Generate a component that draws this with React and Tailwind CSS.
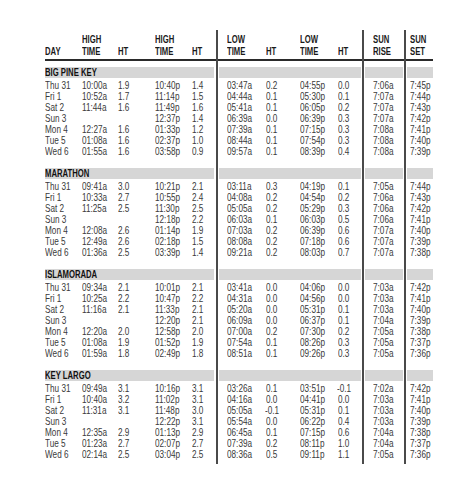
import React from "react";

const font = { fontFamily: '"Liberation Sans", Arial, sans-serif' };

// day, high1, ht, high2, ht, low1, ht, low2, ht, rise, set
const sections = [
  {
    name: "BIG PINE KEY",
    rows: [
      ["Thu 31", "10:00a", "1.9", "10:40p", "1.4", "03:47a", "0.2", "04:55p", "0.0", "7:06a", "7:45p"],
      ["Fri 1", "10:52a", "1.7", "11:14p", "1.5", "04:44a", "0.1", "05:30p", "0.1", "7:07a", "7:44p"],
      ["Sat 2", "11:44a", "1.6", "11:49p", "1.6", "05:41a", "0.1", "06:05p", "0.2", "7:07a", "7:43p"],
      ["Sun 3", "", "", "12:37p", "1.4", "06:39a", "0.0", "06:39p", "0.3", "7:07a", "7:42p"],
      ["Mon 4", "12:27a", "1.6", "01:33p", "1.2", "07:39a", "0.1", "07:15p", "0.3", "7:08a", "7:41p"],
      ["Tue 5", "01:08a", "1.6", "02:37p", "1.0", "08:44a", "0.1", "07:54p", "0.3", "7:08a", "7:40p"],
      ["Wed 6", "01:55a", "1.6", "03:58p", "0.9", "09:57a", "0.1", "08:39p", "0.4", "7:08a", "7:39p"],
    ],
  },
  {
    name: "MARATHON",
    rows: [
      ["Thu 31", "09:41a", "3.0", "10:21p", "2.1", "03:11a", "0.3", "04:19p", "0.1", "7:05a", "7:44p"],
      ["Fri 1", "10:33a", "2.7", "10:55p", "2.4", "04:08a", "0.2", "04:54p", "0.2", "7:06a", "7:43p"],
      ["Sat 2", "11:25a", "2.5", "11:30p", "2.5", "05:05a", "0.2", "05:29p", "0.3", "7:06a", "7:42p"],
      ["Sun 3", "", "", "12:18p", "2.2", "06:03a", "0.1", "06:03p", "0.5", "7:06a", "7:41p"],
      ["Mon 4", "12:08a", "2.6", "01:14p", "1.9", "07:03a", "0.2", "06:39p", "0.6", "7:07a", "7:40p"],
      ["Tue 5", "12:49a", "2.6", "02:18p", "1.5", "08:08a", "0.2", "07:18p", "0.6", "7:07a", "7:39p"],
      ["Wed 6", "01:36a", "2.5", "03:39p", "1.4", "09:21a", "0.2", "08:03p", "0.7", "7:07a", "7:38p"],
    ],
  },
  {
    name: "ISLAMORADA",
    rows: [
      ["Thu 31", "09:34a", "2.1", "10:01p", "2.1", "03:41a", "0.0", "04:06p", "0.0", "7:03a", "7:42p"],
      ["Fri 1", "10:25a", "2.2", "10:47p", "2.2", "04:31a", "0.0", "04:56p", "0.0", "7:03a", "7:41p"],
      ["Sat 2", "11:16a", "2.1", "11:33p", "2.1", "05:20a", "0.0", "05:31p", "0.1", "7:03a", "7:40p"],
      ["Sun 3", "", "", "12:20p", "2.1", "06:09a", "0.0", "06:37p", "0.1", "7:04a", "7:39p"],
      ["Mon 4", "12:20a", "2.0", "12:58p", "2.0", "07:00a", "0.2", "07:30p", "0.2", "7:05a", "7:38p"],
      ["Tue 5", "01:08a", "1.9", "01:52p", "1.9", "07:54a", "0.1", "08:26p", "0.3", "7:05a", "7:37p"],
      ["Wed 6", "01:59a", "1.8", "02:49p", "1.8", "08:51a", "0.1", "09:26p", "0.3", "7:05a", "7:36p"],
    ],
  },
  {
    name: "KEY LARGO",
    rows: [
      ["Thu 31", "09:49a", "3.1", "10:16p", "3.1", "03:26a", "0.1", "03:51p", "-0.1", "7:02a", "7:42p"],
      ["Fri 1", "10:40a", "3.2", "11:02p", "3.1", "04:16a", "0.0", "04:41p", "0.0", "7:03a", "7:41p"],
      ["Sat 2", "11:31a", "3.1", "11:48p", "3.0", "05:05a", "-0.1", "05:31p", "0.1", "7:03a", "7:40p"],
      ["Sun 3", "", "", "12:22p", "3.1", "05:54a", "0.0", "06:22p", "0.4", "7:03a", "7:39p"],
      ["Mon 4", "12:35a", "2.9", "01:13p", "2.9", "06:45a", "0.1", "07:15p", "0.6", "7:04a", "7:38p"],
      ["Tue 5", "01:23a", "2.7", "02:07p", "2.7", "07:39a", "0.2", "08:11p", "1.0", "7:04a", "7:37p"],
      ["Wed 6", "02:14a", "2.5", "03:04p", "2.5", "08:36a", "0.5", "09:11p", "1.1", "7:05a", "7:36p"],
    ],
  },
];

// each group: which row fields, column widths, left padding, band margin
const groups = [
  { idx: [0, 1, 2, 3, 4], cols: "grid-cols-[37px_36px_37px_37px_1fr]", head: [["", "DAY"], ["HIGH", "TIME"], ["", "HT"], ["HIGH", "TIME"], ["", "HT"]], w: "w-[171px]", pad: "pl-0", band: "mr-[2px]", first: true },
  { idx: [5, 6, 7, 8], cols: "grid-cols-[39px_34px_38px_1fr]", head: [["LOW", "TIME"], ["", "HT"], ["LOW", "TIME"], ["", "HT"]], w: "w-[146px]", pad: "pl-[9px]", band: "mx-[1px]" },
  { idx: [9], cols: "grid-cols-[1fr]", head: [["SUN", "RISE"]], w: "w-[42px]", pad: "pl-[9px]", band: "mx-[1px]" },
  { idx: [10], cols: "grid-cols-[1fr]", head: [["SUN", "SET"]], w: "w-[29px]", pad: "pl-[4px]", band: "ml-[1px]" },
];

// narrow text: the print uses a condensed face, so squeeze Liberation Sans
const Narrow = ({ children, bold }) => (
  <span className={`inline-block whitespace-nowrap origin-left ${bold ? "scale-x-[0.7]" : "scale-x-[0.78]"}`}>{children}</span>
);

function Group({ g }) {
  return (
    <div className={`${g.w} shrink-0 flex flex-col ${g.first ? "" : "border-l-2 border-[#4a4a4a]"}`}>
      {/* header */}
      <div className={`h-[31px] pt-[3px] border-b-2 border-[#2a2a2a] ${g.pad} grid ${g.cols} text-[11px] font-bold text-[#1a1a1a] leading-[12px]`}>
        {g.head.map((h, i) => (
          <div key={i}>
            <div className="h-[12px]"><Narrow bold>{h[0]}</Narrow></div>
            <div className="h-[12px]"><Narrow bold>{h[1]}</Narrow></div>
          </div>
        ))}
      </div>
      <div className="h-[6px]" />
      {sections.map((s, si) => (
        <div key={s.name} className={si < sections.length - 1 ? "h-[101px]" : "h-[94px]"}>
          <div className={`h-[11px] bg-[#d6d6d6] ${g.band} text-[11px] font-bold text-[#111] leading-[11px]`}>
            {g.first ? <Narrow bold>{s.name}</Narrow> : null}
          </div>
          <div className="h-[2px]" />
          {s.rows.map((r, ri) => (
            <div key={ri} className={`h-[11px] ${g.pad} grid ${g.cols} text-[10.5px] text-[#3a3a3a] leading-[11px]`}>
              {g.idx.map((k) => (
                <div key={k} className={r[k].startsWith("-") ? "-ml-[1px]" : ""}>
                  <Narrow>{r[k]}</Narrow>
                </div>
              ))}
            </div>
          ))}
        </div>
      ))}
    </div>
  );
}

export default function App() {
  return (
    <div className="w-[476px] h-[500px] bg-white" style={font}>
      <div className="pt-[30px] pl-[45px] flex">
        {groups.map((g, i) => (
          <Group key={i} g={g} />
        ))}
      </div>
    </div>
  );
}
